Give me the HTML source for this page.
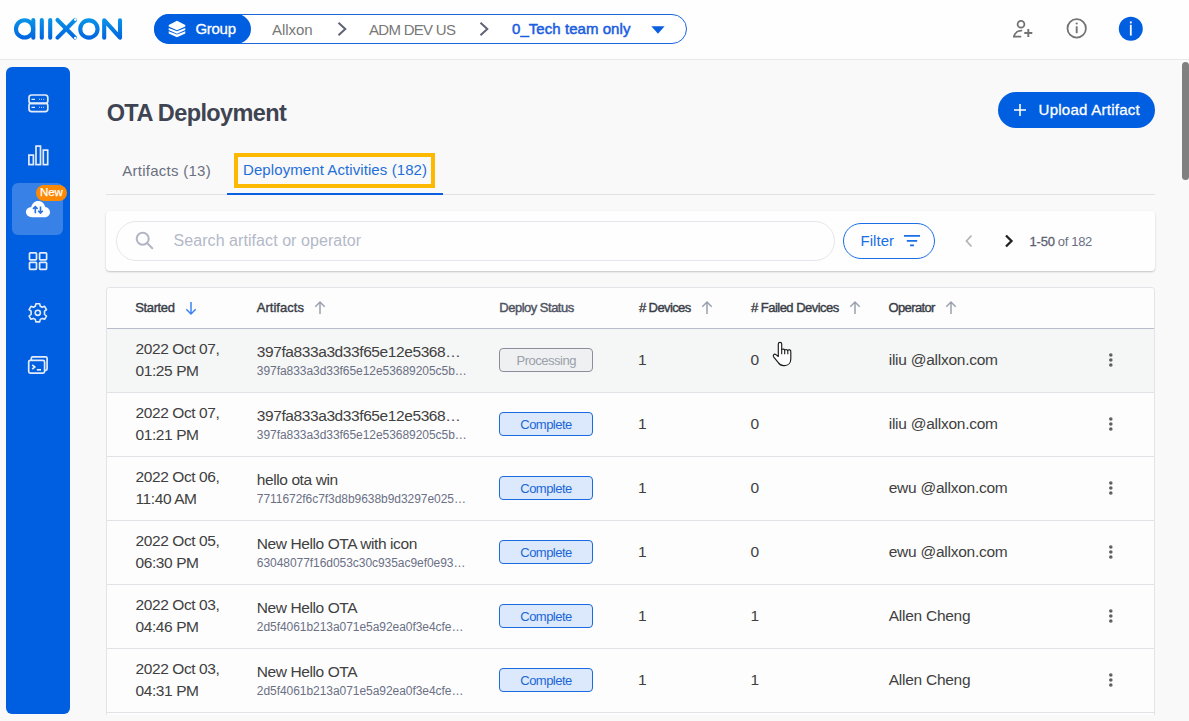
<!DOCTYPE html>
<html><head><meta charset="utf-8">
<style>
*{box-sizing:border-box;margin:0;padding:0}
html,body{width:1189px;height:721px;overflow:hidden;background:#f9f9f9;font-family:"Liberation Sans",sans-serif;position:relative}
.abs{position:absolute}
.t{position:absolute;white-space:nowrap;line-height:1}
#hdr{position:absolute;left:0;top:0;width:1189px;height:60px;background:#fefefe;border-bottom:1px solid #e8e9ec}
#side{position:absolute;left:6px;top:67px;width:64px;height:647px;background:#005ee0;border-radius:6px}
#crumb{position:absolute;left:154px;top:14px;width:533px;height:30px;border:1px solid #1a66e0;border-radius:15px;background:#fff}
#grpbtn{position:absolute;left:154px;top:14px;width:97px;height:30px;border-radius:15px;background:#005ee0}
#upload{position:absolute;left:998px;top:92px;width:157px;height:36px;border-radius:18px;background:#005ee0}
#tabline{position:absolute;left:106px;top:194px;width:1049px;height:1px;background:#e1e2e6}
#tabul{position:absolute;left:227px;top:193px;width:216px;height:2px;background:#0a5fe0}
#tabbox{position:absolute;left:234px;top:153px;width:201px;height:35px;border:4px solid #fdb900}
#scard{position:absolute;left:106px;top:211px;width:1049px;height:60px;background:#fefefe;border-radius:4px;box-shadow:0 1px 2px rgba(0,0,0,0.22)}
#spill{position:absolute;left:116px;top:221px;width:719px;height:40px;border:1px solid #e6e7ec;border-radius:20px;background:#fefefe}
#filter{position:absolute;left:843px;top:223px;width:92px;height:36px;border:1.5px solid #1a6ee6;border-radius:18px}
#tcard{position:absolute;left:106px;top:287px;width:1049px;height:428px;background:#fdfdfd;border:1px solid #e3e4e7;border-bottom:0;border-radius:4px 4px 0 0;overflow:hidden}
#thead{position:absolute;left:0;top:0;width:1047px;height:41px;border-bottom:1px solid #b9bdcb;background:#fdfdfd}
.row{position:absolute;left:0;width:1047px;height:64px;border-bottom:1px solid #e2e3e6}
.badge{position:absolute;left:499px;width:94px;height:24px;border-radius:4px}
.proc{background:#eff0f1;border:1px solid #8a8e9c}
.comp{background:#dce9fc;border:1.5px solid #1a6be0}
#scroll{position:absolute;left:1182px;top:62px;width:7px;height:118px;background:#808080;border-radius:4px}
</style></head>
<body>
<div id="hdr"></div>
<!-- logo -->
<svg class="abs" style="left:0;top:0" width="140" height="60" viewBox="0 0 140 60">
<defs><linearGradient id="lg" x1="0" y1="17" x2="0" y2="40" gradientUnits="userSpaceOnUse"><stop offset="0" stop-color="#0a98e8"/><stop offset="1" stop-color="#0062e0"/></linearGradient></defs>
<g fill="none" stroke="url(#lg)" stroke-width="4.1" stroke-linecap="round">
<circle cx="24.6" cy="28.9" r="8.6"/>
<line x1="33.3" y1="20" x2="33.3" y2="37.8"/>
<line x1="41.8" y1="20" x2="41.8" y2="37.8"/>
<line x1="50.2" y1="20" x2="50.2" y2="37.8"/>
<line x1="57.5" y1="20" x2="75" y2="37.6"/>
<line x1="57.5" y1="37.6" x2="75" y2="20"/>
<circle cx="88.9" cy="29" r="8.65"/>
<path d="M104.2 37.7V20.2L120 37.7V20.2" stroke-linejoin="round"/>
</g>
<circle cx="75.3" cy="19.6" r="1.3" fill="#fff"/>
<circle cx="75.3" cy="38" r="1.3" fill="#fff"/>
</svg>
<div id="crumb"></div>
<div id="grpbtn"></div>
<!-- stack icon -->
<svg class="abs" style="left:166px;top:19px" width="22" height="20" viewBox="0 0 22 20">
<path d="M11 1.8L19.3 6.1V7.5L11 11.2L2.7 7.5V6.1Z" fill="#fff"/>
<path d="M2.7 9L11 12.3L19.3 9V11.1L11 14.7L2.7 11.1Z" fill="#fff"/>
<path d="M2.7 12.3L11 15.6L19.3 12.3V14.4L11 18.2L2.7 14.4Z" fill="#fff"/>
</svg>
<!-- chevrons -->
<svg class="abs" style="left:334px;top:19px" width="16" height="20" viewBox="0 0 16 20"><path d="M4.5 3.8L11.3 10L4.5 16.2" fill="none" stroke="#5f6377" stroke-width="2"/></svg>
<svg class="abs" style="left:476px;top:19px" width="16" height="20" viewBox="0 0 16 20"><path d="M4.5 3.8L11.3 10L4.5 16.2" fill="none" stroke="#5f6377" stroke-width="2"/></svg>
<!-- dropdown triangle -->
<svg class="abs" style="left:650px;top:25px" width="16" height="10" viewBox="0 0 16 10"><path d="M1.3 1.3H14.6L8 8.7Z" fill="#0a5fe0"/></svg>
<!-- right header icons -->
<svg class="abs" style="left:1010px;top:17px" width="24" height="24" viewBox="0 0 24 24">
<circle cx="11" cy="7.3" r="3.4" fill="none" stroke="#737373" stroke-width="1.8"/>
<path d="M3.9 19.6C4.6 16.2 7.6 13.6 11.4 13.6" fill="none" stroke="#737373" stroke-width="1.8" stroke-linecap="round"/>
<path d="M3.9 19.6H10.5" fill="none" stroke="#737373" stroke-width="1.8" stroke-linecap="round"/>
<path d="M18.3 12V20M14.3 16H22.3" fill="none" stroke="#737373" stroke-width="1.9"/>
</svg>
<svg class="abs" style="left:1064px;top:16px" width="26" height="26" viewBox="0 0 26 26">
<circle cx="12.7" cy="12.4" r="9.2" fill="none" stroke="#737373" stroke-width="1.8"/>
<circle cx="12.7" cy="7.5" r="1.1" fill="#737373"/>
<path d="M12.7 10.3V17.2" stroke="#737373" stroke-width="1.9"/>
</svg>
<svg class="abs" style="left:1118px;top:16px" width="26" height="26" viewBox="0 0 26 26">
<circle cx="12.8" cy="12.8" r="12" fill="#005ee0"/>
<rect x="11.9" y="5.4" width="1.8" height="2" fill="#fff"/>
<rect x="11.9" y="8.8" width="1.8" height="10.8" fill="#fff"/>
</svg>
<div id="scroll"></div>

<!-- sidebar -->
<div id="side"></div>
<div class="abs" style="left:12px;top:183px;width:51px;height:52px;border-radius:6px;background:rgba(255,255,255,0.22)"></div>
<svg class="abs" style="left:6px;top:67px" width="64" height="320" viewBox="0 0 64 320">
<g fill="none" stroke="#e3ecfb" stroke-width="1.7">
<!-- server -->
<rect x="23" y="28" width="18.8" height="8.7" rx="2.6"/>
<rect x="23" y="36" width="18.8" height="8.7" rx="2.6"/>
<!-- bars -->
<rect x="22.9" y="88.1" width="4.5" height="9.5"/>
<rect x="30" y="79.1" width="4.5" height="18.5"/>
<rect x="37.3" y="83.1" width="4.4" height="14.5"/>
<!-- apps -->
<rect x="23.5" y="185.8" width="7" height="7" rx="0.8"/>
<rect x="33.6" y="185.8" width="7" height="7" rx="0.8"/>
<rect x="23.5" y="195.3" width="7" height="7" rx="0.8"/>
<rect x="33.6" y="195.3" width="7" height="7" rx="0.8"/>
<!-- terminal -->
<path d="M25.3 293.3V291.3A1.5 1.5 0 0 1 26.8 289.8H39.6A1.5 1.5 0 0 1 41.1 291.3V301.8A1.5 1.5 0 0 1 39.6 303.3H38.6"/>
<rect x="22.7" y="293.3" width="15.9" height="12.8" rx="1.6"/>
<path d="M26.2 297.8L28.8 300L26.2 302.2"/>
<path d="M30.8 302.8H35"/>
</g>
<g stroke="#e3ecfb" stroke-width="1.3">
<path d="M25.5 32.4H29M33 32.4H33.7M35.2 32.4H35.9M37.4 32.4H38.1"/>
<path d="M25.5 40.3H29M33 40.3H33.7M35.2 40.3H35.9M37.4 40.3H38.1"/>
</g>
<!-- gear -->
<g transform="translate(31.8,245.8)" fill="none" stroke="#e3ecfb" stroke-width="1.6" stroke-linejoin="round">
<path d="M-1.9 -9.1H1.9L2.5 -6.6L4.4 -5.6L6.8 -6.5L8.7 -3.2L6.7 -1.6V1.6L8.7 3.2L6.8 6.5L4.4 5.6L2.5 6.6L1.9 9.1H-1.9L-2.5 6.6L-4.4 5.6L-6.8 6.5L-8.7 3.2L-6.7 1.6V-1.6L-8.7 -3.2L-6.8 -6.5L-4.4 -5.6L-2.5 -6.6Z"/>
<circle cx="0" cy="0" r="2.6"/>
</g>
</svg>
<!-- cloud -->
<svg class="abs" style="left:24px;top:198px" width="28" height="22" viewBox="0 0 28 22">
<path d="M8 19.3C4.6 19.3 2 17 2 14.1C2 11.3 4.3 9.2 7.2 9.1C8 5.5 10.7 2.9 14.2 2.9C17.8 2.9 20.6 5.6 21.2 9.1C24 9.3 26 11.5 26 14.3C26 17.1 23.7 19.3 20.6 19.3Z" fill="#fff"/>
<path d="M11.3 15.2V8.6M9 10.9L11.3 8.6L13.6 10.9" fill="none" stroke="#2a72e0" stroke-width="1.6"/>
<path d="M16.5 8.4V15M14.2 12.7L16.5 15L18.8 12.7" fill="none" stroke="#2a72e0" stroke-width="1.6"/>
</svg>
<div class="abs" style="left:36px;top:185px;width:31px;height:16px;border-radius:8px;background:#fe8a04"></div>
<span class="t" style="left:40px;top:187.2px;font-size:11.5px;color:#fff;letter-spacing:-0.1px;-webkit-text-stroke:0.25px #fff">New</span>

<!-- tabs -->
<div id="tabline"></div>
<div id="tabul"></div>
<div id="tabbox"></div>
<div id="upload"></div>
<svg class="abs" style="left:1012px;top:102px" width="16" height="16" viewBox="0 0 16 16"><path d="M8 2V14M2 8H14" stroke="#fff" stroke-width="1.6"/></svg>

<!-- search card -->
<div id="scard"></div>
<div id="spill"></div>
<svg class="abs" style="left:132px;top:228px" width="24" height="24" viewBox="0 0 24 24"><circle cx="10.7" cy="10.7" r="6" fill="none" stroke="#b2b5c4" stroke-width="2"/><path d="M15 15L20.3 20.2" stroke="#b2b5c4" stroke-width="2" stroke-linecap="round"/></svg>
<div id="filter"></div>
<svg class="abs" style="left:902px;top:232px" width="20" height="16" viewBox="0 0 20 16"><path d="M2 3.9H18M4.8 8.9H15.2M8 13.3H12" stroke="#1a6ee6" stroke-width="1.8"/></svg>
<svg class="abs" style="left:961px;top:232px" width="14" height="18" viewBox="0 0 14 18"><path d="M10.5 3.5L5.5 9L10.5 14.5" fill="none" stroke="#b5b5b5" stroke-width="1.8"/></svg>
<svg class="abs" style="left:1002px;top:232px" width="14" height="18" viewBox="0 0 14 18"><path d="M4 3.5L9.5 9L4 14.5" fill="none" stroke="#222" stroke-width="2.3"/></svg>

<!-- table -->
<div id="tcard">
<div id="thead"></div>
<div class="row" style="top:41px;background:#f5f6f6"></div>
<div class="row" style="top:105px;background:#fdfdfd"></div>
<div class="row" style="top:169px;background:#fdfdfd"></div>
<div class="row" style="top:233px;background:#fdfdfd"></div>
<div class="row" style="top:297px;background:#fdfdfd"></div>
<div class="row" style="top:361px;background:#fdfdfd"></div>
<div class="row" style="top:425px;background:#fdfdfd"></div>
</div>
<div class="badge proc" style="top:348px"></div>
<svg class="abs" style="left:1105px;top:350px" width="12" height="20" viewBox="0 0 12 20"><circle cx="5.8" cy="5" r="1.8" fill="#606060"/><circle cx="5.8" cy="10" r="1.8" fill="#606060"/><circle cx="5.8" cy="15" r="1.8" fill="#606060"/></svg>
<div class="badge comp" style="top:412px"></div>
<svg class="abs" style="left:1105px;top:414px" width="12" height="20" viewBox="0 0 12 20"><circle cx="5.8" cy="5" r="1.8" fill="#606060"/><circle cx="5.8" cy="10" r="1.8" fill="#606060"/><circle cx="5.8" cy="15" r="1.8" fill="#606060"/></svg>
<div class="badge comp" style="top:476px"></div>
<svg class="abs" style="left:1105px;top:478px" width="12" height="20" viewBox="0 0 12 20"><circle cx="5.8" cy="5" r="1.8" fill="#606060"/><circle cx="5.8" cy="10" r="1.8" fill="#606060"/><circle cx="5.8" cy="15" r="1.8" fill="#606060"/></svg>
<div class="badge comp" style="top:540px"></div>
<svg class="abs" style="left:1105px;top:542px" width="12" height="20" viewBox="0 0 12 20"><circle cx="5.8" cy="5" r="1.8" fill="#606060"/><circle cx="5.8" cy="10" r="1.8" fill="#606060"/><circle cx="5.8" cy="15" r="1.8" fill="#606060"/></svg>
<div class="badge comp" style="top:604px"></div>
<svg class="abs" style="left:1105px;top:606px" width="12" height="20" viewBox="0 0 12 20"><circle cx="5.8" cy="5" r="1.8" fill="#606060"/><circle cx="5.8" cy="10" r="1.8" fill="#606060"/><circle cx="5.8" cy="15" r="1.8" fill="#606060"/></svg>
<div class="badge comp" style="top:668px"></div>
<svg class="abs" style="left:1105px;top:670px" width="12" height="20" viewBox="0 0 12 20"><circle cx="5.8" cy="5" r="1.8" fill="#606060"/><circle cx="5.8" cy="10" r="1.8" fill="#606060"/><circle cx="5.8" cy="15" r="1.8" fill="#606060"/></svg>
<!-- sort arrows -->
<svg class="abs" style="left:184px;top:300px" width="14" height="16" viewBox="0 0 14 16"><path d="M7 2V14M2.3 9.3L7 14L11.7 9.3" fill="none" stroke="#3b82f6" stroke-width="1.5"/></svg>
<svg class="abs" style="left:313px;top:300px" width="14" height="16" viewBox="0 0 14 16"><path d="M7 14V2M2.3 6.7L7 2L11.7 6.7" fill="none" stroke="#9aa0ae" stroke-width="1.5"/></svg>
<svg class="abs" style="left:700px;top:300px" width="14" height="16" viewBox="0 0 14 16"><path d="M7 14V2M2.3 6.7L7 2L11.7 6.7" fill="none" stroke="#9aa0ae" stroke-width="1.5"/></svg>
<svg class="abs" style="left:848px;top:300px" width="14" height="16" viewBox="0 0 14 16"><path d="M7 14V2M2.3 6.7L7 2L11.7 6.7" fill="none" stroke="#9aa0ae" stroke-width="1.5"/></svg>
<svg class="abs" style="left:944px;top:300px" width="14" height="16" viewBox="0 0 14 16"><path d="M7 14V2M2.3 6.7L7 2L11.7 6.7" fill="none" stroke="#9aa0ae" stroke-width="1.5"/></svg>

<span id="grp" class="t" style="left:195.5px;top:21.25px;font-size:15px;font-weight:normal;color:#ffffff;letter-spacing:-0.301px;-webkit-text-stroke:0.3px #ffffff;">Group</span>
<span id="allx" class="t" style="left:272px;top:21.75px;font-size:15px;font-weight:normal;color:#787878;letter-spacing:-0.072px;">Allxon</span>
<span id="adm" class="t" style="left:369px;top:22.25px;font-size:15px;font-weight:normal;color:#787878;letter-spacing:-0.707px;">ADM DEV US</span>
<span id="tech" class="t" style="left:512px;top:21.25px;font-size:15px;font-weight:normal;color:#1a5ddf;letter-spacing:0.055px;-webkit-text-stroke:0.3px #1a5ddf;-webkit-text-stroke:0.5px #1a5ddf;">0_Tech team only</span>
<span id="title" class="t" style="left:106.7px;top:102.03px;font-size:23.5px;font-weight:bold;color:#3e4452;letter-spacing:-0.601px;">OTA Deployment</span>
<span id="tab1" class="t" style="left:122.2px;top:162.55px;font-size:15px;font-weight:normal;color:#6b7080;letter-spacing:0.267px;">Artifacts (13)</span>
<span id="tab2" class="t" style="left:243px;top:161.75px;font-size:15px;font-weight:normal;color:#1f6fd9;letter-spacing:0.087px;">Deployment Activities (182)</span>
<span id="upl" class="t" style="left:1038.6px;top:102.25px;font-size:15px;font-weight:normal;color:#ffffff;letter-spacing:0.253px;-webkit-text-stroke:0.3px #ffffff;">Upload Artifact</span>
<span id="srch" class="t" style="left:173.5px;top:233.00px;font-size:16px;font-weight:normal;color:#b3b9c8;letter-spacing:0.066px;">Search artifact or operator</span>
<span id="filt" class="t" style="left:860.6px;top:233.25px;font-size:15px;font-weight:normal;color:#1a6ee6;letter-spacing:0.011px;">Filter</span>
<span id="pg1" class="t" style="left:1029.5px;top:235.15px;font-size:13px;font-weight:normal;color:#5b6172;letter-spacing:-0.177px;-webkit-text-stroke:0.3px #5b6172;">1-50</span>
<span id="pg2" class="t" style="left:1057.8px;top:235.15px;font-size:13px;font-weight:normal;color:#6b7085;letter-spacing:-0.331px;">of 182</span>
<span id="h1" class="t" style="left:135.2px;top:301.15px;font-size:13px;font-weight:normal;color:#3a3d48;letter-spacing:-0.354px;-webkit-text-stroke:0.3px #3a3d48;-webkit-text-stroke:0.4px #3a3d48;">Started</span>
<span id="h2" class="t" style="left:256.7px;top:301.15px;font-size:13px;font-weight:normal;color:#3a3d48;letter-spacing:0.041px;-webkit-text-stroke:0.3px #3a3d48;-webkit-text-stroke:0.4px #3a3d48;">Artifacts</span>
<span id="h3" class="t" style="left:499.3px;top:301.15px;font-size:13px;font-weight:normal;color:#4e5362;letter-spacing:-0.503px;-webkit-text-stroke:0.3px #4e5362;-webkit-text-stroke:0.4px #4e5362;">Deploy Status</span>
<span id="h4" class="t" style="left:639px;top:301.15px;font-size:13px;font-weight:normal;color:#3a3d48;letter-spacing:-0.610px;-webkit-text-stroke:0.3px #3a3d48;-webkit-text-stroke:0.4px #3a3d48;"># Devices</span>
<span id="h5" class="t" style="left:751px;top:301.15px;font-size:13px;font-weight:normal;color:#3a3d48;letter-spacing:-0.521px;-webkit-text-stroke:0.3px #3a3d48;-webkit-text-stroke:0.4px #3a3d48;"># Failed Devices</span>
<span id="h6" class="t" style="left:888.5px;top:301.15px;font-size:13px;font-weight:normal;color:#3a3d48;letter-spacing:-0.630px;-webkit-text-stroke:0.3px #3a3d48;-webkit-text-stroke:0.4px #3a3d48;">Operator</span>
<span id="r0d1" class="t" style="left:135.5px;top:340.82px;font-size:15.5px;font-weight:normal;color:#404040;letter-spacing:-0.406px;">2022 Oct 07,</span>
<span id="r0d2" class="t" style="left:135.5px;top:362.82px;font-size:15.5px;font-weight:normal;color:#404040;letter-spacing:-0.406px;">01:25 PM</span>
<span id="r0a1" class="t" style="left:256.8px;top:343.62px;font-size:15.5px;font-weight:normal;color:#404040;letter-spacing:-0.407px;">397fa833a3d33f65e12e5368…</span>
<span id="r0a2" class="t" style="left:256.8px;top:364.50px;font-size:12px;font-weight:normal;color:#6b7085;letter-spacing:-0.050px;">397fa833a3d33f65e12e53689205c5b…</span>
<span id="r0n" class="t" style="left:638px;top:351.82px;font-size:15.5px;font-weight:normal;color:#404040;letter-spacing:0.000px;">1</span>
<span id="r0f" class="t" style="left:750.5px;top:351.82px;font-size:15.5px;font-weight:normal;color:#404040;letter-spacing:0.000px;">0</span>
<span id="r0o" class="t" style="left:888.7px;top:351.82px;font-size:15.5px;font-weight:normal;color:#404040;letter-spacing:-0.253px;">iliu @allxon.com</span>
<span id="r0s" class="t" style="left:516.5px;top:353.95px;font-size:13px;font-weight:normal;color:#9aa0ab;letter-spacing:-0.490px;">Processing</span>
<span id="r1d1" class="t" style="left:135.5px;top:404.82px;font-size:15.5px;font-weight:normal;color:#404040;letter-spacing:-0.406px;">2022 Oct 07,</span>
<span id="r1d2" class="t" style="left:135.5px;top:426.82px;font-size:15.5px;font-weight:normal;color:#404040;letter-spacing:-0.406px;">01:21 PM</span>
<span id="r1a1" class="t" style="left:256.8px;top:407.62px;font-size:15.5px;font-weight:normal;color:#404040;letter-spacing:-0.407px;">397fa833a3d33f65e12e5368…</span>
<span id="r1a2" class="t" style="left:256.8px;top:428.50px;font-size:12px;font-weight:normal;color:#6b7085;letter-spacing:-0.050px;">397fa833a3d33f65e12e53689205c5b…</span>
<span id="r1n" class="t" style="left:638px;top:415.82px;font-size:15.5px;font-weight:normal;color:#404040;letter-spacing:0.000px;">1</span>
<span id="r1f" class="t" style="left:750.5px;top:415.82px;font-size:15.5px;font-weight:normal;color:#404040;letter-spacing:0.000px;">0</span>
<span id="r1o" class="t" style="left:888.7px;top:415.82px;font-size:15.5px;font-weight:normal;color:#404040;letter-spacing:-0.253px;">iliu @allxon.com</span>
<span id="r1s" class="t" style="left:520.3px;top:417.95px;font-size:13px;font-weight:normal;color:#1a66d6;letter-spacing:-0.534px;">Complete</span>
<span id="r2d1" class="t" style="left:135.5px;top:468.82px;font-size:15.5px;font-weight:normal;color:#404040;letter-spacing:-0.406px;">2022 Oct 06,</span>
<span id="r2d2" class="t" style="left:135.5px;top:490.82px;font-size:15.5px;font-weight:normal;color:#404040;letter-spacing:-0.406px;">11:40 AM</span>
<span id="r2a1" class="t" style="left:256.8px;top:471.62px;font-size:15.5px;font-weight:normal;color:#404040;letter-spacing:-0.407px;">hello ota win</span>
<span id="r2a2" class="t" style="left:256.8px;top:492.50px;font-size:12px;font-weight:normal;color:#6b7085;letter-spacing:-0.050px;">7711672f6c7f3d8b9638b9d3297e025…</span>
<span id="r2n" class="t" style="left:638px;top:479.82px;font-size:15.5px;font-weight:normal;color:#404040;letter-spacing:0.000px;">1</span>
<span id="r2f" class="t" style="left:750.5px;top:479.82px;font-size:15.5px;font-weight:normal;color:#404040;letter-spacing:0.000px;">0</span>
<span id="r2o" class="t" style="left:888.7px;top:479.82px;font-size:15.5px;font-weight:normal;color:#404040;letter-spacing:-0.253px;">ewu @allxon.com</span>
<span id="r2s" class="t" style="left:520.3px;top:481.95px;font-size:13px;font-weight:normal;color:#1a66d6;letter-spacing:-0.534px;">Complete</span>
<span id="r3d1" class="t" style="left:135.5px;top:532.83px;font-size:15.5px;font-weight:normal;color:#404040;letter-spacing:-0.406px;">2022 Oct 05,</span>
<span id="r3d2" class="t" style="left:135.5px;top:554.83px;font-size:15.5px;font-weight:normal;color:#404040;letter-spacing:-0.406px;">06:30 PM</span>
<span id="r3a1" class="t" style="left:256.8px;top:535.62px;font-size:15.5px;font-weight:normal;color:#404040;letter-spacing:-0.407px;">New Hello OTA with icon</span>
<span id="r3a2" class="t" style="left:256.8px;top:556.50px;font-size:12px;font-weight:normal;color:#6b7085;letter-spacing:-0.050px;">63048077f16d053c30c935ac9ef0e93…</span>
<span id="r3n" class="t" style="left:638px;top:543.83px;font-size:15.5px;font-weight:normal;color:#404040;letter-spacing:0.000px;">1</span>
<span id="r3f" class="t" style="left:750.5px;top:543.83px;font-size:15.5px;font-weight:normal;color:#404040;letter-spacing:0.000px;">0</span>
<span id="r3o" class="t" style="left:888.7px;top:543.83px;font-size:15.5px;font-weight:normal;color:#404040;letter-spacing:-0.253px;">ewu @allxon.com</span>
<span id="r3s" class="t" style="left:520.3px;top:545.95px;font-size:13px;font-weight:normal;color:#1a66d6;letter-spacing:-0.534px;">Complete</span>
<span id="r4d1" class="t" style="left:135.5px;top:596.83px;font-size:15.5px;font-weight:normal;color:#404040;letter-spacing:-0.406px;">2022 Oct 03,</span>
<span id="r4d2" class="t" style="left:135.5px;top:618.83px;font-size:15.5px;font-weight:normal;color:#404040;letter-spacing:-0.406px;">04:46 PM</span>
<span id="r4a1" class="t" style="left:256.8px;top:599.62px;font-size:15.5px;font-weight:normal;color:#404040;letter-spacing:-0.407px;">New Hello OTA</span>
<span id="r4a2" class="t" style="left:256.8px;top:620.50px;font-size:12px;font-weight:normal;color:#6b7085;letter-spacing:-0.050px;">2d5f4061b213a071e5a92ea0f3e4cfe…</span>
<span id="r4n" class="t" style="left:638px;top:607.83px;font-size:15.5px;font-weight:normal;color:#404040;letter-spacing:0.000px;">1</span>
<span id="r4f" class="t" style="left:750.5px;top:607.83px;font-size:15.5px;font-weight:normal;color:#404040;letter-spacing:0.000px;">1</span>
<span id="r4o" class="t" style="left:888.7px;top:607.83px;font-size:15.5px;font-weight:normal;color:#404040;letter-spacing:-0.253px;">Allen Cheng</span>
<span id="r4s" class="t" style="left:520.3px;top:609.95px;font-size:13px;font-weight:normal;color:#1a66d6;letter-spacing:-0.534px;">Complete</span>
<span id="r5d1" class="t" style="left:135.5px;top:660.83px;font-size:15.5px;font-weight:normal;color:#404040;letter-spacing:-0.406px;">2022 Oct 03,</span>
<span id="r5d2" class="t" style="left:135.5px;top:682.83px;font-size:15.5px;font-weight:normal;color:#404040;letter-spacing:-0.406px;">04:31 PM</span>
<span id="r5a1" class="t" style="left:256.8px;top:663.62px;font-size:15.5px;font-weight:normal;color:#404040;letter-spacing:-0.407px;">New Hello OTA</span>
<span id="r5a2" class="t" style="left:256.8px;top:684.50px;font-size:12px;font-weight:normal;color:#6b7085;letter-spacing:-0.050px;">2d5f4061b213a071e5a92ea0f3e4cfe…</span>
<span id="r5n" class="t" style="left:638px;top:671.83px;font-size:15.5px;font-weight:normal;color:#404040;letter-spacing:0.000px;">1</span>
<span id="r5f" class="t" style="left:750.5px;top:671.83px;font-size:15.5px;font-weight:normal;color:#404040;letter-spacing:0.000px;">1</span>
<span id="r5o" class="t" style="left:888.7px;top:671.83px;font-size:15.5px;font-weight:normal;color:#404040;letter-spacing:-0.253px;">Allen Cheng</span>
<span id="r5s" class="t" style="left:520.3px;top:673.95px;font-size:13px;font-weight:normal;color:#1a66d6;letter-spacing:-0.534px;">Complete</span>

<!-- hand cursor -->
<svg class="abs" style="left:771px;top:340px" width="22" height="28" viewBox="0 0 22 28">
<path d="M7.3 16.5V4A1.7 1.7 0 0 1 10.7 4V9.5L11.6 9.3A1.5 1.5 0 0 1 13.7 9.9L14.6 9.8A1.5 1.5 0 0 1 16.8 10.6A1.6 1.6 0 0 1 19.8 11.5V19C19.8 22.8 17.3 25.6 13.5 25.6H12.5C10 25.6 8.6 24.6 7.3 22.6L2.6 16.8A1.6 1.6 0 0 1 4.6 14.4Z" fill="#fff" stroke="#1a1a1a" stroke-width="1.15" stroke-linejoin="round"/>
<path d="M10.7 9.5V14.2M13.7 9.9V14.2M16.8 10.6V14.2" stroke="#1a1a1a" stroke-width="1.1"/>
</svg>
</body></html>
